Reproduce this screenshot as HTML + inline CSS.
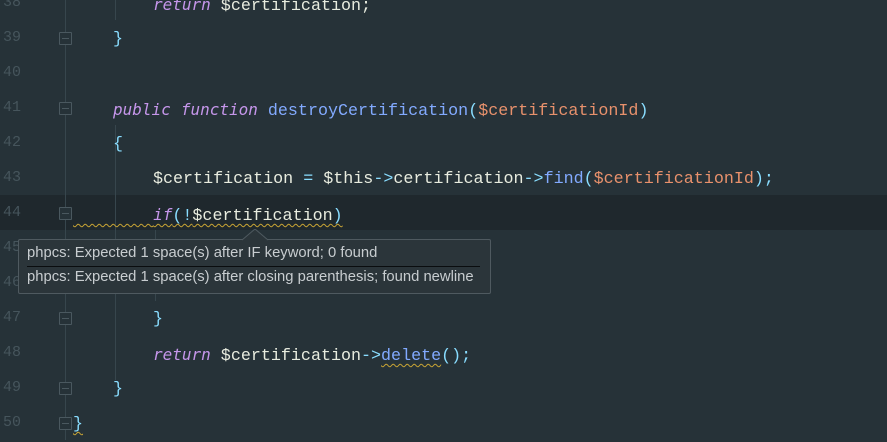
<!DOCTYPE html>
<html><head><style>
body{margin:0;width:887px;height:440px;background:#263238;overflow:hidden;position:relative;font-family:"Liberation Mono",monospace;}
.ln{position:absolute;left:3px;width:40px;font-size:15px;color:#46555c;height:35px;line-height:35px}
.c{position:absolute;left:113px;font-size:16.7px;height:35px;line-height:35px;color:#e8ecdf;white-space:pre;margin-top:2px}
.k{color:#c596ea;font-style:italic;font-family:"DejaVu Sans Mono",monospace;font-size:16px}
.f{color:#82aaff}.v{color:#e8916c}.p{color:#89ddff}
.sq{text-decoration:underline wavy #c9a534;text-decoration-thickness:1px;text-underline-offset:3px}
.fold{position:absolute;left:59px;width:11px;height:11px;border:1px solid #4a585f;border-radius:1px;background:#263238}
.fold:after{content:"";position:absolute;left:2px;right:2px;top:5px;height:1px;background:#4a585f}
.g{position:absolute;width:1px;background:#37464d}
</style></head><body>
<div style="position:absolute;left:0;top:195px;width:887px;height:35px;background:#1f282d"></div>
<div class="g" style="left:65px;top:0;height:440px"></div>
<div class="g" style="left:115px;top:0;height:20px"></div>
<div class="g" style="left:115px;top:125px;height:255px"></div>
<div class="g" style="left:155px;top:230px;height:10px;"></div>
<div class="g" style="left:155px;top:293px;height:8px;"></div>

<div class="ln" style="top:-15px">38</div>
<div class="ln" style="top:20px">39</div>
<div class="ln" style="top:55px">40</div>
<div class="ln" style="top:90px">41</div>
<div class="ln" style="top:125px">42</div>
<div class="ln" style="top:160px">43</div>
<div class="ln" style="top:195px">44</div>
<div class="ln" style="top:230px">45</div>
<div class="ln" style="top:265px">46</div>
<div class="ln" style="top:300px">47</div>
<div class="ln" style="top:335px">48</div>
<div class="ln" style="top:370px">49</div>
<div class="ln" style="top:405px">50</div>

<div class="fold" style="top:32px"></div>
<div class="fold" style="top:102px"></div>
<div class="fold" style="top:207px"></div>
<div class="fold" style="top:312px"></div>
<div class="fold" style="top:382px"></div>
<div class="fold" style="top:417px"></div>

<div class="c" style="top:-15px;left:153px"><span class="k">return</span> $certification;</div>
<div class="c" style="top:20px"><span class="p">}</span></div>
<div class="c" style="top:90px"><span class="k">public</span> <span class="k">function</span> <span class="f">destroyCertification</span><span class="p">(</span><span class="v">$certificationId</span><span class="p">)</span></div>
<div class="c" style="top:125px"><span class="p">{</span></div>
<div class="c" style="top:160px;left:153px">$certification <span class="p">=</span> $this<span class="p">-&gt;</span>certification<span class="p">-&gt;</span><span class="f">find</span><span class="p">(</span><span class="v">$certificationId</span><span class="p">);</span></div>
<div class="c" style="top:195px;left:73px"><span class="sq">        <span class="k">if</span><span class="p">(!</span>$certification<span class="p">)</span></span></div>
<div class="c" style="top:300px;left:153px"><span class="p">}</span></div>
<div class="c" style="top:335px;left:153px"><span class="k">return</span> $certification<span class="p">-&gt;</span><span class="f sq">delete</span><span class="p">();</span></div>
<div class="c" style="top:370px"><span class="p">}</span></div>
<div class="c" style="top:405px;left:73px"><span class="p sq">}</span></div>

<div style="position:absolute;left:18px;top:239px;width:471px;height:53px;background:#2b353a;border:1px solid #4f5a60;border-radius:2px;font-family:'Liberation Sans',sans-serif;font-size:14.8px;color:#c8cdd0">
<div style="position:absolute;left:8px;top:5px">phpcs: Expected 1 space(s) after IF keyword; 0 found</div>
<div style="position:absolute;left:8px;right:10px;top:26px;height:1px;background:#0a0d0f"></div>
<div style="position:absolute;left:8px;top:29px">phpcs: Expected 1 space(s) after closing parenthesis; found newline</div>
</div>
<svg style="position:absolute;left:242px;top:229px" width="26" height="12"><path d="M0 11 L13 0 L26 11" fill="#2b353a" stroke="#4f5a60"/></svg>
</body></html>
